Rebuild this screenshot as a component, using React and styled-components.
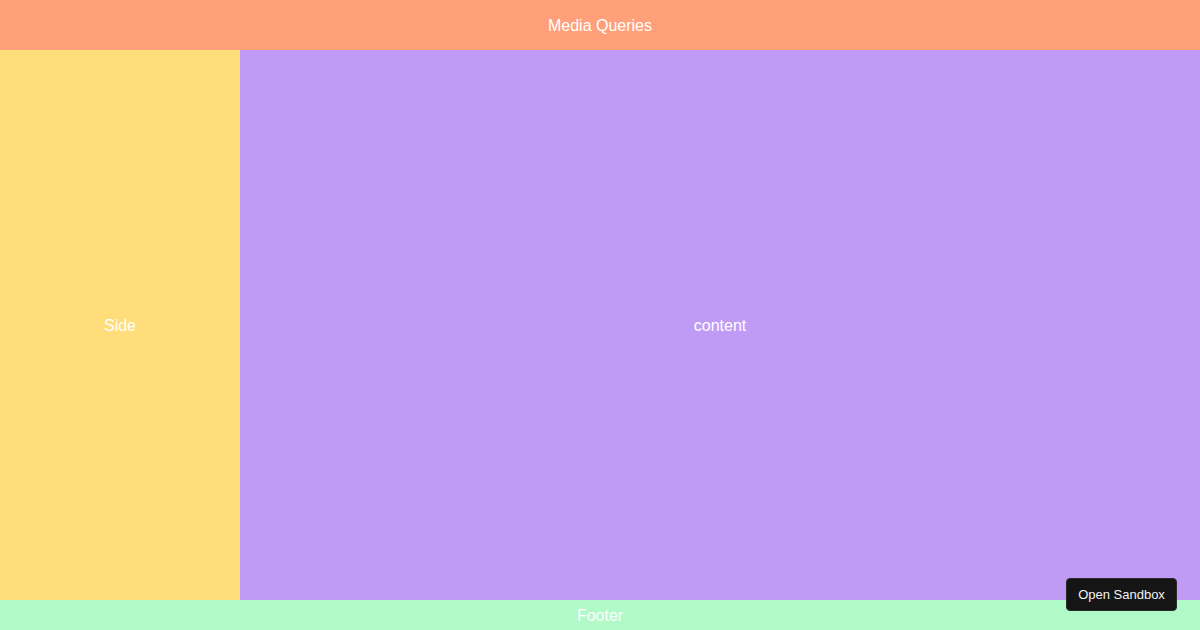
import React from "react";
import styled, { createGlobalStyle } from "styled-components";

const Global = createGlobalStyle`
  html, body { margin: 0; padding: 0; height: 100%; }
  body { font-family: "Liberation Sans", Arial, sans-serif; }
  #root { height: 100%; }
`;

const Page = styled.div`
  display: grid;
  grid-template-rows: 50px 1fr 30px;
  height: 630px;
  color: #fff;
  font-size: 16px;
`;

const Header = styled.header`
  display: flex;
  align-items: center;
  justify-content: center;
  padding-top: 2px;
  box-sizing: border-box;
  background: #ffa07a;
`;

const Main = styled.div`
  display: grid;
  grid-template-columns: 240px 1fr;
`;

const Panel = styled.div`
  display: flex;
  align-items: center;
  justify-content: center;
  padding-top: 2px;
  box-sizing: border-box;
  background: ${(p) => p.$bg};
`;

const Footer = styled.footer`
  display: flex;
  align-items: center;
  justify-content: center;
  padding-top: 2px;
  box-sizing: border-box;
  background: #b0fac8;
`;

const SandboxButton = styled.button`
  position: fixed;
  right: 23px;
  bottom: 19px;
  width: 111px;
  height: 33px;
  padding: 0;
  border: 1px solid #2a2a2a;
  border-radius: 4px;
  background: #151515;
  color: #f2f2f2;
  font-family: "Liberation Sans", Arial, sans-serif;
  font-size: 13px;
  cursor: pointer;
`;

export default function App() {
  return (
    <>
      <Global />
      <Page>
        <Header>Media Queries</Header>
        <Main>
          <Panel $bg="#ffdd7a">Side</Panel>
          <Panel $bg="#bf9bf5">content</Panel>
        </Main>
        <Footer>Footer</Footer>
      </Page>
      <SandboxButton>Open Sandbox</SandboxButton>
    </>
  );
}
